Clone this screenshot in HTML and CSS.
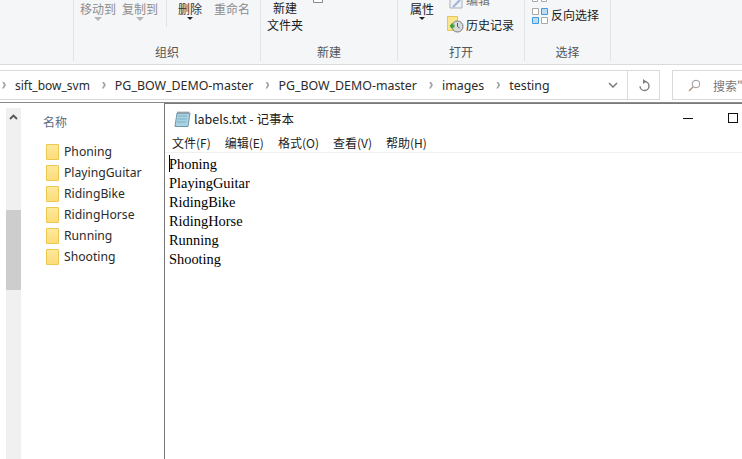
FILE: index.html
```html
<!DOCTYPE html>
<html lang="zh">
<head>
<meta charset="utf-8">
<title>labels.txt - 记事本</title>
<link rel="stylesheet" href="styles.css">
</head>
<body>
<div class="explorer">
  <section class="ribbon">
    <div class="group g-first"></div>
    <div class="group g-org">
      <div class="tools">
        <div class="tool dim w-move">移动到<i class="caret caret-dim"></i></div>
        <div class="tool dim w-copy">复制到<i class="caret caret-dim"></i></div>
        <div class="minisep"></div>
        <div class="tool w-del">删除<i class="caret"></i></div>
        <div class="tool dim w-ren">重命名</div>
      </div>
      <div class="glabel">组织</div>
    </div>
    <div class="group g-new">
      <div class="tools">
        <div class="tool w-newf">新建<br>文件夹</div>
        <svg class="newitem" width="10" height="3" viewBox="0 0 10 3"><path d="M.5 0v2.5h9V0" fill="#fff" stroke="#8a8a8a"/></svg>
      </div>
      <div class="glabel">新建</div>
    </div>
    <div class="group g-open">
      <div class="tools">
        <div class="tool w-prop">属性<i class="caret"></i></div>
        <div class="openlist">
          <div class="openrow clip"><svg width="15" height="9" viewBox="0 0 15 9"><path d="M1 0v8h12V0" fill="#eef1f6" stroke="#a9b2bf"/><path d="M4 7l7-7" stroke="#9db4d4" stroke-width="2"/></svg><span class="cliptext">编辑</span></div>
          <div class="openrow">
            <svg width="17" height="17" viewBox="0 0 17 17"><path d="M.5.5h10v14H.5z" fill="#fde58f" stroke="#e6c65a"/><circle cx="10.5" cy="10.5" r="5.5" fill="#d9dcdf" stroke="#777"/><path d="M10.5 7v3.5l2 1.5" stroke="#555" fill="none"/><path d="M2.5 10l3-3.500v2h2v3h-2v2z" fill="#3aa53a"/></svg>
            <span>历史记录</span>
          </div>
        </div>
      </div>
      <div class="glabel">打开</div>
    </div>
    <div class="group g-sel">
      <div class="tools">
        <svg class="seltop" width="16" height="2" viewBox="0 0 16 2"><path d="M.5 0v1.500h5V0M9.500 0v1.500h5V0" fill="#fff" stroke="#a8a8a8"/></svg>
        <svg class="selicon" width="16" height="16" viewBox="0 0 16 16"><path d="M.5.500h6v6h-6zM9.500 9.500h6v6h-6z" fill="#fff" stroke="#a8a8a8"/><path d="M9.500.500h6v6h-6zM.5 9.500h6v6h-6z" fill="#bfdcf5" stroke="#3f9ae0"/></svg>
        <span class="seltext">反向选择</span>
      </div>
      <div class="glabel">选择</div>
    </div>
    <div class="group g-rest"></div>
  </section>
  <nav class="addrbar">
    <div class="addr">
      <div class="crumbs">
        <i class="chev"></i><span class="narrow">sift_bow_svm</span>
        <i class="chev"></i><span>PG_BOW_DEMO-master</span>
        <i class="chev"></i><span>PG_BOW_DEMO-master</span>
        <i class="chev"></i><span>images</span>
        <i class="chev"></i><span>testing</span>
      </div>
      <svg class="drop" width="10" height="6" viewBox="0 0 10 6"><path d="M1 1l4 4 4-4" fill="none" stroke="#7a7a7a" stroke-width="1.500"/></svg>
      <div class="refresh"><svg width="12" height="13" viewBox="0 0 12 13"><path d="M6.500 2.500a4.500 4.500 0 1 1-4.500 4.700" fill="none" stroke="#7d7d7d" stroke-width="1.400"/><path d="M5 0l3.500 2.500L5 5z" fill="#7d7d7d"/></svg></div>
    </div>
    <div class="search">
      <svg width="13" height="13" viewBox="0 0 13 13"><circle cx="8" cy="5" r="3.800" fill="none" stroke="#9a9a9a"/><path d="M5 8l-4 4" stroke="#b88a6a" stroke-width="1.200"/></svg>
      <span>搜索"</span>
    </div>
  </nav>
  <main class="content">
    <div class="scroll">
      <svg class="up" width="9" height="6" viewBox="0 0 9 6"><path d="M1 5l3.500-3.500L8 5" fill="none" stroke="#555" stroke-width="1.800"/></svg>
      <div class="thumb"></div>
    </div>
    <div class="files">
      <div class="colhead">名称</div>
      <ul class="list">
        <li><i class="folder"></i>Phoning</li>
        <li><i class="folder"></i>PlayingGuitar</li>
        <li><i class="folder"></i>RidingBike</li>
        <li><i class="folder"></i>RidingHorse</li>
        <li><i class="folder"></i>Running</li>
        <li><i class="folder"></i>Shooting</li>
      </ul>
    </div>
  </main>
</div>
<div class="notepad">
  <header class="titlebar">
    <svg class="npicon" width="17" height="16" viewBox="0 0 17 16"><path d="M3 2h13l-2 13.500H1z" fill="#a9d3e3" stroke="#6f97a8"/><path d="M4 5h9M3.500 8h9M3 11h9" stroke="#7fb0c4"/><path d="M3.500 1.500h12" stroke="#777" stroke-width="2" stroke-dasharray="1 1"/></svg>
    <span class="nptitle">labels.txt - 记事本</span>
    <span class="winmin"></span>
    <span class="winmax"></span>
  </header>
  <div class="menu">
    <span>文件(F)</span><span>编辑(E)</span><span>格式(O)</span><span>查看(V)</span><span>帮助(H)</span>
  </div>
  <pre class="editor"><i class="textcaret"></i>Phoning
PlayingGuitar
RidingBike
RidingHorse
Running
Shooting</pre>
</div>
</body>
</html>
```
FILE: styles.css
```css
* { box-sizing: border-box; }
html, body { margin: 0; height: 100%; overflow: hidden; background: #fff; }
body { position: relative; font-family: "Noto Sans CJK SC", "Noto Sans", sans-serif; font-size: 12px; color: #1a1a1a; }
.explorer { height: 459px; display: flex; flex-direction: column; }

/* ribbon */
.ribbon { display: flex; height: 65px; background: #f5f6f7; border-bottom: 1px solid #dadbdc; overflow: hidden; padding-bottom: 3px; }
.group { display: flex; flex-direction: column; border-right: 1px solid #e2e3e4; }
.g-first { width: 74px; }
.g-org { width: 187px; }
.g-new { width: 137px; }
.g-open { width: 127px; }
.g-sel { width: 86px; }
.g-rest { flex: 1; border-right: 0; }
.tools { flex: 1; display: flex; min-height: 0; position: relative; }
.glabel { height: 20px; line-height: 22px; text-align: center; color: #555; }
.tool { text-align: center; line-height: 18px; padding-top: 0; position: relative; }
.dim { color: #8d8d8d; }
.w-move { margin-left: 6px; width: 36px; }
.w-copy { margin-left: 6px; width: 36px; }
.minisep { width: 1px; height: 27px; background: #e2e3e4; margin-left: 8px; }
.w-del { width: 24px; margin-left: 11px; color: #333; }
.w-ren { width: 36px; margin-left: 12px; }
.w-newf { width: 36px; margin-left: 6px; line-height: 17px; margin-top: -1px; }
.w-prop { width: 24px; margin-left: 12px; }
.caret { display: block; width: 0; height: 0; margin: -1px auto 0; border: 3px solid transparent; border-top: 3px solid #222; border-bottom: 0; }
.caret-dim { border-top-color: #b5b5b5; border-width: 4px 4px 0; }
.newitem { position: absolute; left: 52px; top: 0; }
.openlist { display: flex; flex-direction: column; margin-left: 13px; }
.openrow { display: flex; align-items: center; gap: 2px; height: 16px; }
.openrow.clip { height: 9px; overflow: hidden; align-items: flex-start; gap: 2px; margin-left: 2px; }
.openrow:not(.clip) { margin-top: 7px; }
.cliptext { color: #777; margin-top: -9px; line-height: 18px; }
.selicon { margin: 8px 0 0 7px; }
.seltext { margin: 6px 0 0 3px; line-height: 18px; }
.seltop { position: absolute; left: 7px; top: 0; }

/* address */
.addrbar { display: flex; height: 38px; padding: 5px 0 2px; gap: 12px; border-bottom: 1px solid #8a8a8a; }
.addr { width: 661px; margin-left: -1px; display: flex; align-items: center; border: 1px solid #d9d9d9; border-left: 0; }
.crumbs { flex: 1; display: flex; align-items: center; color: #2b2b2b; font-family: "Noto Sans", sans-serif; font-size: 12.400px; white-space: nowrap; }
.chev { width: 4px; height: 7px; margin: 0 9px 0 3px; background: #a0a0a0; clip-path: polygon(0 0, 45% 0, 100% 50%, 45% 100%, 0 100%, 50% 50%); }
.crumbs span { margin-right: 9px; }
.crumbs .narrow { font-size: 12px; }
.drop { margin-right: 9px; }
.refresh { width: 32px; height: 100%; border-left: 1px solid #d9d9d9; display: flex; align-items: center; justify-content: center; }
.search { flex: 1; display: flex; align-items: center; gap: 12px; padding-left: 15px; border: 1px solid #d9d9d9; border-right: 0; color: #777; white-space: nowrap; overflow: hidden; }
.search svg { flex: none; }

/* content */
.content { flex: 1; display: flex; min-height: 0; }
.scroll { width: 15px; margin: 5px 0 0 6px; background: #f0f0f0; position: relative; }
.up { display: block; margin: 6px auto 0; }
.thumb { position: absolute; left: 0; right: 0; top: 102px; height: 80px; background: #cdcdcd; }
.files { margin-left: 22px; }
.colhead { margin-top: 10px; color: #5a6a7f; line-height: 18px; }
.list { list-style: none; margin: 10px 0 0 3px; padding: 0; font-family: "Noto Sans", sans-serif; font-size: 12.200px; color: #2b2b2b; }
.list li { display: flex; align-items: center; height: 21px; gap: 5px; }
.folder { display: block; width: 13px; height: 16px; background: linear-gradient(#fee89c, #fddc78); border: 1px solid #ecc850; border-top-right-radius: 1px; }

/* notepad window */
.notepad { position: absolute; left: 164px; top: 103px; right: 0; bottom: 0; background: #fff; border: 1px solid #7a7a7a; border-width: 1px 0 0 1px; }
.titlebar { height: 29px; display: flex; align-items: center; padding-left: 9px; position: relative; }
.npicon { flex: none; }
.nptitle { margin-left: 3px; font-size: 12.500px; color: #222; }
.winmin { position: absolute; left: 518px; top: 14px; width: 10px; height: 1px; background: #111; }
.winmax { position: absolute; left: 563px; top: 9px; width: 10px; height: 10px; border: 1px solid #111; }
.menu { height: 20px; display: flex; gap: 14px; padding-left: 7px; line-height: 20px; border-bottom: 1px solid #f0f0f0; color: #222; }
.editor { margin: 0; padding: 2px 0 0 4px; font-family: "Liberation Serif", serif; font-size: 14.400px; line-height: 19px; color: #000; position: relative; }
.textcaret { position: absolute; left: 4px; top: 2px; width: 1px; height: 17px; background: #000; }
```
